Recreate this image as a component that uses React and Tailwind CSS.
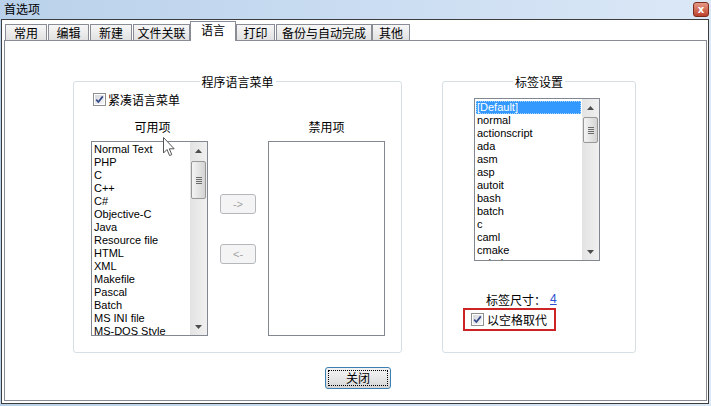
import React from "react";

const LEFT_ITEMS = [
  "Normal Text", "PHP", "C", "C++", "C#", "Objective-C", "Java", "Resource file",
  "HTML", "XML", "Makefile", "Pascal", "Batch", "MS INI file", "MS-DOS Style",
];

const TAG_ITEMS = [
  "[Default]", "normal", "actionscript", "ada", "asm", "asp", "autoit",
  "bash", "batch", "c", "caml", "cmake", "cobol",
];

const TABS = [
  { label: "常用", cls: "w-[42px]" },
  { label: "编辑", cls: "w-[41px] ml-[1px]" },
  { label: "新建", cls: "w-[42px] ml-[1px]" },
  { label: "文件关联", cls: "w-[57px] ml-[1px]" },
  { label: "语言", cls: "w-[46px]", active: true },
  { label: "打印", cls: "w-[39px]" },
  { label: "备份与自动完成", cls: "w-[96px] ml-[1px]" },
  { label: "其他", cls: "w-[38px]" },
];

function Check() {
  return (
    <span className="w-[13px] h-[13px] shrink-0 border border-[#8e8f8f] bg-white p-[1px] flex">
      <span className="flex-1 flex items-center justify-center bg-gradient-to-br from-[#d6d8dc] to-[#f6f7f8]">
        <svg width="9" height="9" viewBox="0 0 9 9">
          <path d="M1.2 4.6 L3.4 7 L7.8 1.4" stroke="#34488a" strokeWidth="1.7" fill="none" />
        </svg>
      </span>
    </span>
  );
}

function Arrow({ down }) {
  return (
    <div className="h-[17px] flex items-center justify-center">
      <svg width="7" height="4" viewBox="0 0 7 4">
        <path d={down ? "M0 0 H7 L3.5 4 Z" : "M0 4 H7 L3.5 0 Z"} fill="#4d4d4d" />
      </svg>
    </div>
  );
}

function ScrollBar({ thumbTop, thumbH }) {
  return (
    <div className="w-[17px] h-full shrink-0 flex flex-col bg-gradient-to-r from-[#e3e3e3] to-[#f0f0f0]">
      <Arrow />
      <div className="flex-1 px-[1px]">
        <div
          className="rounded-[2px] border border-[#989898] bg-gradient-to-r from-[#f4f4f4] to-[#d4d4d4] flex flex-col items-center justify-center gap-[1px]"
          style={{ marginTop: thumbTop, height: thumbH }}
        >
          <span className="w-[6px] h-px bg-[#6b6b6b]" />
          <span className="w-[6px] h-px bg-[#6b6b6b]" />
          <span className="w-[6px] h-px bg-[#6b6b6b]" />
          <span className="w-[6px] h-px bg-[#6b6b6b]" />
        </div>
      </div>
      <Arrow down />
    </div>
  );
}

function ArrowBtn({ text, cls }) {
  return (
    <div className={`h-[20px] rounded-[3px] border border-[#b4b8bb] bg-[#f4f4f4] flex items-center justify-center text-[11px] text-[#a3a3a3] font-['Liberation_Sans',sans-serif] ${cls}`}>
      {text}
    </div>
  );
}

export default function App() {
  return (
    <div className="relative w-[711px] h-[406px] overflow-hidden bg-gradient-to-r from-[#b9d1ea] via-[#c9dcf1] to-[#dbe8f6] font-['Noto_Sans_CJK_SC',sans-serif] text-[12px] text-black">
      {/* title bar */}
      <div className="h-[19px] flex justify-between pl-[4px] pr-[2px]">
        <span className="leading-[18px]">首选项</span>
        <span className="mt-[2px] w-[16px] h-[15px] rounded-[3px] border border-[#7e2b1e] bg-gradient-to-b from-[#e49a86] to-[#bd3f2a] flex items-center justify-center text-white text-[10px] font-bold leading-none font-['DejaVu_Sans',sans-serif]">
          x
        </span>
      </div>

      {/* client */}
      <div className="ml-[1px] w-[708px] h-[385px] border border-[#3d3d3d] bg-white px-[1px]">
        <div className="ml-[2px] h-[20px] flex items-end">
          {TABS.map((t) =>
            t.active ? (
              <div key={t.label} className={`relative z-10 h-[20px] -mb-[1px] border border-b-0 border-[#898c95] bg-white text-center leading-[16px] ${t.cls}`}>
                {t.label}
              </div>
            ) : (
              <div key={t.label} className={`h-[16px] border border-b-0 border-[#898c95] bg-gradient-to-b from-[#f7f7f7] to-[#e1e1e1] text-center leading-[15px] ${t.cls}`}>
                {t.label}
              </div>
            )
          )}
        </div>

        <div className="ml-[1px] w-[703px] h-[361px] border border-[#898c95] pl-[68px] pt-[40px] flex flex-col">
          <div className="flex gap-[40px]">
            {/* 程序语言菜单 */}
            <div className="relative w-[329px] h-[272px] border border-[#d5dfe5] rounded-[3px] flex flex-col">
              <span className="absolute top-[-8px] left-1/2 -translate-x-1/2 bg-white px-[2px] leading-[15px] whitespace-nowrap">程序语言菜单</span>
              <div className="ml-[19px] mt-[11px] h-[13px] flex items-center gap-[2px]">
                <Check />
                <span className="leading-[13px]">紧凑语言菜单</span>
              </div>
              <div className="ml-[17px] mt-[13px] flex">
                <div className="w-[117px] flex flex-col">
                  <div className="h-[15px] leading-[15px] text-center pl-[6px]">可用项</div>
                  <div className="mt-[7px] h-[195px] border border-[#828790] bg-white flex">
                    <div className="flex-1 overflow-hidden pt-[1px] pl-[2px] font-['Liberation_Sans',sans-serif] text-[11px]">
                      {LEFT_ITEMS.map((it) => (
                        <div key={it} className="h-[13px] leading-[13px] whitespace-nowrap">{it}</div>
                      ))}
                    </div>
                    <ScrollBar thumbTop={2} thumbH={38} />
                  </div>
                </div>
                <div className="ml-[12px] w-[36px] flex flex-col">
                  <ArrowBtn text="->" cls="mt-[75px]" />
                  <ArrowBtn text="<-" cls="mt-[30px]" />
                </div>
                <div className="ml-[12px] w-[117px] flex flex-col">
                  <div className="h-[15px] leading-[15px] text-center">禁用项</div>
                  <div className="mt-[7px] h-[195px] border border-[#828790] bg-white" />
                </div>
              </div>
            </div>

            {/* 标签设置 */}
            <div className="relative w-[194px] h-[272px] border border-[#d5dfe5] rounded-[3px] flex flex-col">
              <span className="absolute top-[-8px] left-1/2 -translate-x-1/2 bg-white px-[2px] leading-[15px] whitespace-nowrap">标签设置</span>
              <div className="ml-[31px] mt-[16px] w-[126px] h-[163px] border border-[#828790] bg-white flex">
                <div className="flex-1 overflow-hidden pt-[2px] font-['Liberation_Sans',sans-serif] text-[11px]">
                  {TAG_ITEMS.map((it, i) => (
                    <div
                      key={it}
                      className={i === 0
                        ? "mx-[1px] h-[13px] leading-[13px] pl-[1px] bg-[#3399ff] text-white outline outline-1 outline-dotted outline-[#9fcfff] -outline-offset-1"
                        : "mx-[1px] h-[13px] leading-[13px] pl-[1px] whitespace-nowrap"}
                    >
                      {it}
                    </div>
                  ))}
                </div>
                <ScrollBar thumbTop={1} thumbH={26} />
              </div>
              <div className="ml-[43px] mt-[31px] h-[15px] leading-[15px] flex items-center">
                <span>标签尺寸：</span>
                <span className="ml-[4px] text-[#2b4fcf] underline font-['Liberation_Sans',sans-serif] text-[12px]">4</span>
              </div>
              <div className="ml-[20px] mt-[1px] w-[93px] h-[23px] border-2 border-[#cc2424] flex items-center pl-[6px] gap-[3px]">
                <Check />
                <span className="leading-[13px]">以空格取代</span>
              </div>
            </div>
          </div>

          <div className="ml-[252px] mt-[14px] w-[66px] h-[22px] rounded-[3px] border border-[#3c7fb1] bg-gradient-to-b from-[#f3f3f3] via-[#e8e8e8] to-[#d4d4d4] p-[2px] flex">
            <div className="flex-1 border border-dotted border-black flex items-center justify-center leading-none">
              关闭
            </div>
          </div>
        </div>
      </div>

      {/* mouse cursor */}
      <svg className="absolute left-[163px] top-[137px]" width="13" height="20" viewBox="0 0 13 20">
        <path d="M0.5 0.5 V16 L4 12.5 L6.6 18.6 L8.8 17.6 L6.3 11.8 H11.2 Z" fill="white" stroke="#555" strokeWidth="1" strokeLinejoin="round" />
      </svg>
    </div>
  );
}
